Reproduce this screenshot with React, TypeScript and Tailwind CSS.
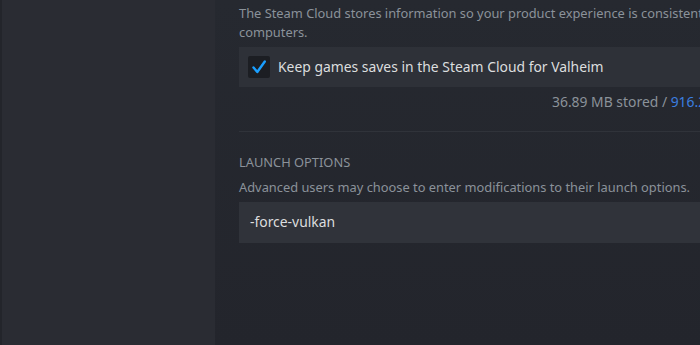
import React from "react";

export default function App() {
  return (
    <div
      className="flex h-[345px] w-[700px] overflow-hidden bg-[#2a2c33]"
      style={{ fontFamily: '"Noto Sans", "Liberation Sans", Arial, sans-serif' }}
    >
      <div className="flex w-[215px] shrink-0">
        <div className="w-[2px] bg-[#23252b]" />
        <div className="flex-1 bg-[#2a2c33]" />
      </div>
      <div className="flex-1 bg-gradient-to-b from-[#262930] to-[#23252c] pl-[24px]">
        <div className="w-[600px]">
          <p className="pt-[4px] text-[12.85px] leading-[19px] text-[#8b929a]">
            The Steam Cloud stores information so your product experience is consistent
            <br />
            computers.
          </p>
          <div className="mt-[5px] flex h-[40px] items-center bg-[#2e3138] pl-[9px]">
            <div className="flex h-[22px] w-[22px] items-center justify-center rounded-[2px] bg-[#1c1e23]">
              <svg width="16" height="16" viewBox="0 0 16 16">
                <path d="M2.5 8.5 L6.3 13 L13.8 2.5" fill="none" stroke="#1a9fff" strokeWidth="2.4" strokeLinecap="round" strokeLinejoin="round" />
              </svg>
            </div>
            <span className="ml-[8px] text-[13.9px] text-[#dcdedf]">Keep games saves in the Steam Cloud for Valheim</span>
          </div>
          <div className="mt-[5px] pl-[313px] text-[13.9px] leading-[20px] whitespace-nowrap text-[#8b929a]">
            36.89 MB stored / <span className="text-[#3b7fe0]">916.25 GB available</span>
          </div>
          <div className="mt-[19px] h-px bg-[#30333a]" />
          <div className="mt-[21px] text-[12.85px] leading-[18px] uppercase text-[#8b929a]">Launch Options</div>
          <div className="mt-[7px] text-[12.85px] leading-[18px] text-[#8b929a]">
            Advanced users may choose to enter modifications to their launch options.
          </div>
          <div className="mt-[6px] flex h-[41px] items-center bg-[#30333a] pl-[11px] text-[13.9px] text-[#dcdedf]">
            -force-vulkan
          </div>
        </div>
      </div>
    </div>
  );
}
